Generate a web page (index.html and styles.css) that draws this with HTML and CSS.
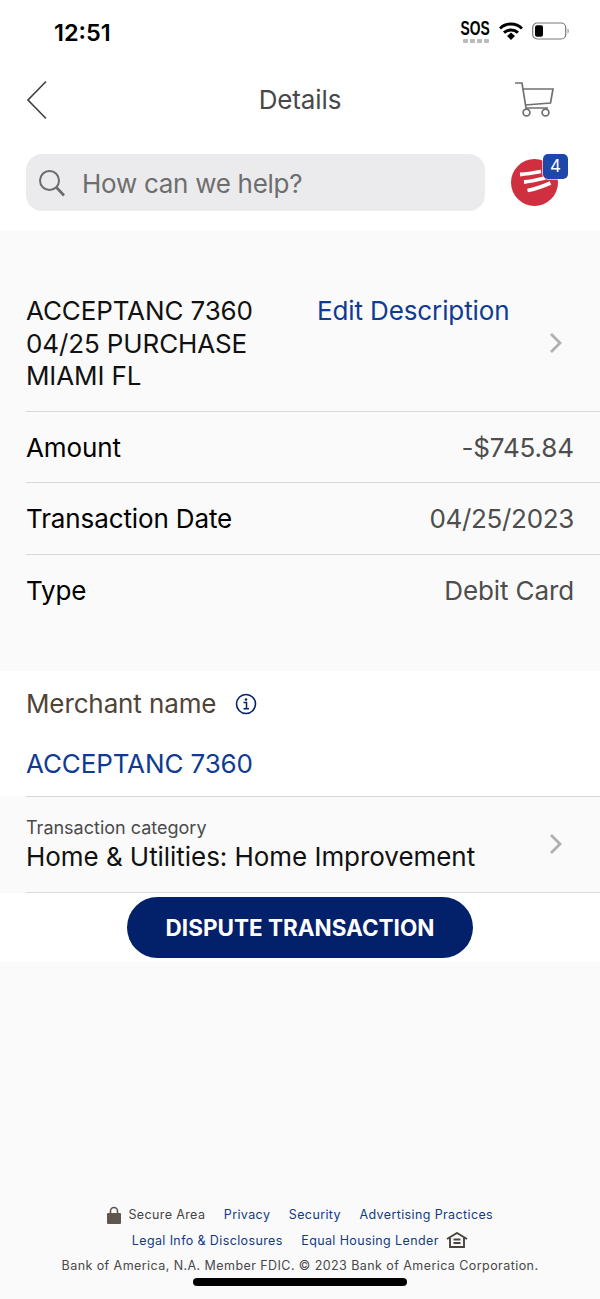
FILE: index.html
```html
<!DOCTYPE html>
<html lang="en">
<head>
<title>Details</title>
<meta charset="utf-8" />
<link rel="stylesheet" href="styles.css">
</head>
<body>
<div class="phone">
	<div class="status">
		<span class="time">12:51</span>
		<div class="status-right">
			<div class="sos"><span class="sos-text">SOS</span><div class="dots"><i></i><i></i><i></i><i></i></div></div>
			<svg class="wifi" width="24" height="18" viewBox="0 0 24 18"><path d="M1 6.500C7 .6 17 .6 23 6.500" fill="none" stroke="#000" stroke-width="3"/><path d="M5 10.600c4-3.600 10-3.600 14 0" fill="none" stroke="#000" stroke-width="3"/><path d="M8 14l4-3.400 4 3.400-4 4z" fill="#000"/></svg>
			<svg class="battery" width="38" height="18" viewBox="0 0 38 18"><rect x=".7" y="1" width="33" height="16" rx="4.500" fill="none" stroke="#777" stroke-width="1.200"/><rect x="3" y="3.200" width="8" height="11.600" rx="2" fill="#000"/><path d="M35.600 6.500c1.400.6 1.400 4.400 0 5z" fill="#777"/></svg>
		</div>
	</div>

	<div class="nav">
		<svg class="back" width="22" height="40" viewBox="0 0 22 40"><path d="M20 1.500L2 20l18 18.500" fill="none" stroke="#444" stroke-width="1.700"/></svg>
		<span class="nav-title">Details</span>
		<svg class="cart" width="40" height="38" viewBox="0 0 40 38"><path d="M1 2h7l4 25h22M9 8h30l-2.500 14-25.500 2" fill="none" stroke="#707070" stroke-width="1.700"/><circle cx="12.500" cy="31.500" r="3.400" fill="none" stroke="#707070" stroke-width="1.700"/><circle cx="31.500" cy="31.500" r="3.400" fill="none" stroke="#707070" stroke-width="1.700"/></svg>
	</div>

	<div class="search-row">
		<div class="search">
			<svg width="28" height="28" viewBox="0 0 28 28"><circle cx="11.500" cy="11.500" r="9.500" fill="none" stroke="#6b6b6b" stroke-width="2"/><path d="M18.500 18.500l7.500 8" fill="none" stroke="#6b6b6b" stroke-width="2.600"/></svg>
			<span>How can we help?</span>
		</div>
		<div class="erica">
			<svg width="47" height="47" viewBox="0 0 47 47"><circle cx="23.500" cy="23.500" r="23.500" fill="#cf2f3e"/><path d="M9 15.500c7-.5 13-1.500 21-3M13 23c7-.5 13-2 21-4M16.500 31.500c8-1.500 15-4 23-7.500" fill="none" stroke="#fff" stroke-width="3.800"/></svg>
			<span class="badge">4</span>
		</div>
	</div>

	<div class="grey top-block">
		<div class="row desc-row">
			<div class="desc">ACCEPTANC 7360<br>04/25 PURCHASE<br>MIAMI FL</div>
			<a class="link edit">Edit Description</a>
			<svg class="chev" width="14" height="22" viewBox="0 0 14 22"><path d="M2 2l9 9-9 9" fill="none" stroke="#b0b0b0" stroke-width="2.800"/></svg>
		</div>
		<div class="row kv first"><span>Amount</span><span class="val">-$745.84</span></div>
		<div class="row kv"><span>Transaction Date</span><span class="val date">04/25/2023</span></div>
		<div class="row kv last"><span>Type</span><span class="val">Debit Card</span></div>
	</div>

	<div class="merchant">
		<div class="merchant-label">Merchant name
			<svg width="22" height="22" viewBox="0 0 22 22"><circle cx="11" cy="11" r="9.500" fill="none" stroke="#012169" stroke-width="1.600"/><circle cx="11" cy="6.500" r="1.300" fill="#012169"/><path d="M8.500 9.500h3v6M8.500 15.800h5.500" fill="none" stroke="#012169" stroke-width="1.500"/></svg>
		</div>
		<a class="link merchant-name">ACCEPTANC 7360</a>
	</div>

	<div class="grey category">
		<div class="cat-text">
			<div class="cat-label">Transaction category</div>
			<div class="cat-value">Home &amp; Utilities: Home Improvement</div>
		</div>
		<svg class="chev" width="14" height="22" viewBox="0 0 14 22"><path d="M2 2l9 9-9 9" fill="none" stroke="#b0b0b0" stroke-width="2.800"/></svg>
	</div>

	<div class="btn-wrap"><a class="btn">DISPUTE TRANSACTION</a></div>

	<div class="spacer"></div>

	<div class="footer">
		<div class="foot-line">
			<svg class="lock" width="14" height="18" viewBox="0 0 14 18"><path d="M3.500 8V5a3.500 3.500 0 017 0v3" fill="none" stroke="#5f564d" stroke-width="1.600"/><rect y="7" width="14" height="11" rx="1" fill="#5f564d"/></svg>
			<span class="secure">Secure Area</span><a>Privacy</a><a>Security</a><a>Advertising Practices</a>
		</div>
		<div class="foot-line">
			<a>Legal Info &amp; Disclosures</a><a>Equal Housing Lender</a>
			<svg class="ehl" width="22" height="16" viewBox="0 0 22 16"><path d="M1 7l10-6 10 6M4 6v9h14V6" fill="none" stroke="#4a443e" stroke-width="1.900"/><path d="M7.500 7.500h7M7.500 11h7" stroke="#4a443e" stroke-width="1.900"/></svg>
		</div>
		<div class="copyright">Bank of America, N.A. Member FDIC. © 2023 Bank of America Corporation.</div>
	</div>

	<div class="home-bar"></div>
</div>
</body>
</html>
```

FILE: styles.css
```css
* {box-sizing: border-box;}
html, body {margin: 0; padding: 0;}
body {background: #fff; font-family: "Inter", "Liberation Sans", sans-serif; color: #000; letter-spacing: -.12px;}
a {color: inherit; text-decoration: none;}
svg {display: block; flex: none;}

.phone {position: relative; width: 600px; height: 1299px; display: flex; flex-direction: column; overflow: hidden;}

.status {height: 62px; padding: 0 30px 0 54px; display: flex; justify-content: space-between; align-items: center; flex: none;}
.time {font-size: 23.500px; font-weight: 600; padding-top: 2px; letter-spacing: 0;}
.status-right {display: flex; align-items: center; gap: 9px;}
.sos {width: 29px; display: flex; flex-direction: column; align-items: center;}
.sos-text {font-family: "Liberation Sans", sans-serif; font-size: 20px; font-weight: 700; line-height: 17px; transform: scaleX(.69); letter-spacing: 0;}
.dots {display: flex; gap: 2px; margin-top: 2px;}
.dots i {width: 5px; height: 4px; background: #bbb; border-radius: 1px;}

.nav {height: 76px; padding: 0 46px 0 26px; display: grid; grid-template-columns: 1fr auto 1fr; align-items: center; flex: none;}
.nav-title {font-size: 26px; color: #484848; line-height: 30px; margin-left: 20px;}
.cart {justify-self: end;}

.search-row {height: 93px; padding: 16px 42px 20px 26px; display: flex; justify-content: space-between; align-items: flex-start; flex: none;}
.search {width: 459px; height: 57px; background: #ebebed; border-radius: 16px; display: flex; align-items: center; gap: 16px; padding: 0 0 0 12px; font-size: 26px; color: #6e6e6e; letter-spacing: -.28px;}
.search span {padding-top: 1px;}
.erica {position: relative; margin-top: 5px; width: 47px; height: 47px;}
.badge {position: absolute; top: -5px; right: -10px; width: 25px; height: 25px; background: #1d47a8; color: #fff; border-radius: 5px; font-size: 17px; text-align: center; line-height: 25px; box-shadow: 0 0 0 1px rgba(255,255,255,.6);}

.grey {background: #fafafa;}
.top-block {height: 440px; padding: 48px 0 0 26px; flex: none;}
.row {border-bottom: 1px solid #d8d8d8; font-size: 26px;}
.desc-row {height: 133px; display: flex; align-items: flex-start; line-height: 32.500px; padding-top: 16px;}
.desc {width: 291px; color: #111;}
.link {color: #0f3b93;}
.chev {margin-left: auto;}
.desc-row .chev {margin: 37px 37px 0 auto;}
.kv {height: 71.500px; display: flex; justify-content: space-between; align-items: center; padding-right: 26px;}
.kv.first {height: 71px;}
.kv.last {border-bottom: 0;}
.val {color: #4d4d4d;}
.val.date {letter-spacing: -.32px;}

.merchant {height: 125px; padding: 0 0 0 26px; flex: none;}
.merchant-label {height: 65px; display: flex; align-items: center; gap: 19px; font-size: 26px; color: #4f4438;}
.merchant-name {display: block; font-size: 26px; margin-top: 12px; line-height: 32px;}

.category {height: 97px; padding: 2px 37px 0 26px; display: flex; align-items: center; flex: none; background: linear-gradient(#d8d8d8, #d8d8d8) 26px 0 / 574px 1px no-repeat, linear-gradient(#d8d8d8, #d8d8d8) 26px 96px / 574px 1px no-repeat, #fafafa;}
.category .chev {margin-bottom: 4px;}
.cat-label {font-size: 18px; color: #4a4a4a; line-height: 20px; letter-spacing: 0;}
.cat-value {font-size: 26px; line-height: 34px; color: #111; margin-top: 2px; letter-spacing: -.05px;}

.btn-wrap {height: 69px; background: #fff; padding-top: 4px; display: flex; justify-content: center; flex: none;}
.btn {width: 346px; height: 61px; border-radius: 31px; background: #03206a; color: #fff; font-size: 22.500px; font-weight: 700; text-align: center; line-height: 61px; letter-spacing: 0;}

.spacer {flex: 1; background: #fafafa;}
.footer {background: #fafafa; height: 97px; display: flex; flex-direction: column; align-items: center; font-size: 12.500px; letter-spacing: .43px; color: #123a84; flex: none;}
.foot-line {height: 25.500px; display: flex; align-items: center; gap: 18.500px; flex: none; letter-spacing: .38px;}
.foot-line .lock {margin-right: -11px;}
.foot-line .ehl {margin-left: -11px;}
.secure {color: #444;}
.copyright {color: #484848; margin-top: 4px; line-height: 18px;}

.home-bar {position: absolute; left: 193px; bottom: 13px; width: 214px; height: 8px; border-radius: 4px; background: #000;}
```
